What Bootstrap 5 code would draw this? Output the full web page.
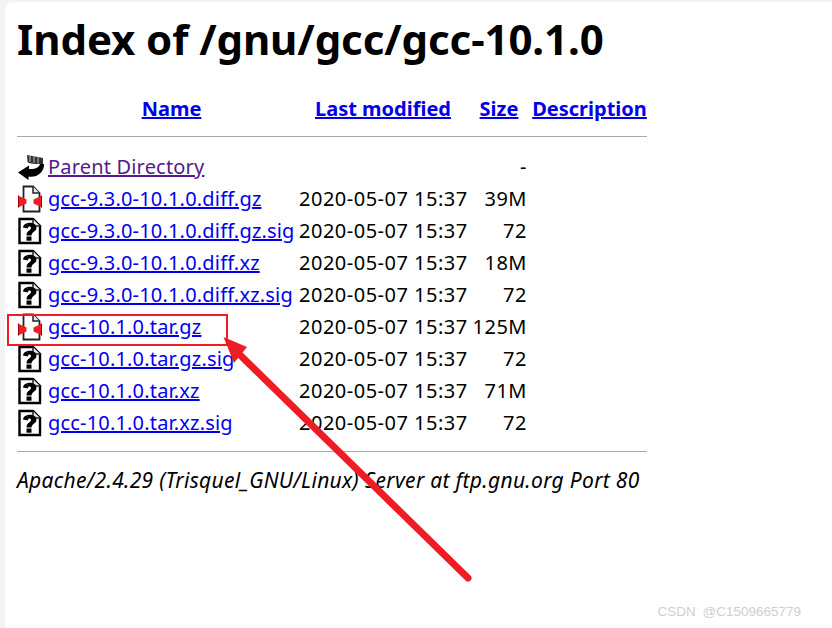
<!DOCTYPE html>
<html lang="en">
<head>
<meta charset="utf-8">
<title>Index of /gnu/gcc/gcc-10.1.0</title>
<link href="https://cdn.jsdelivr.net/npm/bootstrap@5.3.0/dist/css/bootstrap.min.css" rel="stylesheet">
<style>
html,body{height:100%;margin:0;overflow:hidden}
body{background:#f3f3f3;font-family:"Noto Sans","Open Sans",sans-serif;color:#000;font-size:20px;line-height:28px}
.pane{position:relative;margin:2px 0 0 5px;height:626px;background:#fff;border-top-left-radius:8px;padding:0 0 0 12px;overflow:hidden}
.pane-title{font-size:42px;line-height:58px;font-weight:700;margin:0;padding-top:8px;letter-spacing:-.1px}
.listing{border-collapse:separate;border-spacing:2px 0;margin:25px 0 0 -2px;width:634px;table-layout:fixed}
.listing th{font-weight:700;text-align:center;height:32px;padding:0;white-space:nowrap}
.listing th.nmh{padding-right:2px}
.listing th.desc{padding-left:3px}
.listing td{height:32px;padding:0;white-space:nowrap;vertical-align:middle}
.listing a{color:#0000ee}
.listing a.seen{color:#551a8b}
.listing td.nm{letter-spacing:.18px}
.listing td.dt{letter-spacing:.5px}
.listing td.num{text-align:right;letter-spacing:.5px}
.c-ico{width:29px}.c-name{width:249px}.c-date{width:170px}.c-size{width:56px}
.listing .ico-cell svg{display:block;margin-left:1px}
.rule-cell hr{margin:0;border:0;border-top:1px solid #a9a9a9;opacity:1}
.listing td.rule-top{height:26px;vertical-align:top;padding-top:11px}
.listing td.rule-bot{height:13px;vertical-align:bottom}
.srv{font-style:italic;margin:0;padding-top:14px;font-size:21px;letter-spacing:.3px}
.markup{position:absolute;left:-5px;top:-2px;pointer-events:none}
.mark-text{position:absolute;right:31px;bottom:8px;font-size:13.500px;line-height:16px;color:#cfcfcf;word-spacing:3px;font-family:"Liberation Sans",sans-serif}
</style>
</head>
<body>
<svg width="0" height="0" class="d-block" aria-hidden="true">
<defs>
<symbol id="ic-unk" viewBox="0 0 28 28">
<path d="M1.500 2H15L22 9V26H1.500Z" fill="#fff" stroke="#000" stroke-width="2.400"/>
<path d="M15 2V9H22" fill="#e8e8e8" stroke="#222" stroke-width="1.500"/>
<path d="M5 10.500C5.500 4.500 18 4 18.500 10.500C18.800 14.500 13.500 14.500 13.500 18.500H8.500C8.500 13.500 13 13.500 13 11C13 9 10 9 9.700 11.500Z" fill="#000"/>
<rect x="8.500" y="19.500" width="5" height="4.200" fill="#000"/>
</symbol>
<symbol id="ic-gz" viewBox="0 0 28 28">
<path d="M5.500 1.500H15L21.500 8V26.500H5.500Z" fill="#fff" stroke="#222" stroke-width="1.800"/>
<path d="M15 1.500V8H21.500" fill="#e8e8e8" stroke="#222" stroke-width="1.500"/>
<path d="M0 10.500L8.500 14.500V18.500L0 22.500Z" fill="#ee1c25"/>
<path d="M24 10.500L15.500 14.500V18.500L24 22.500Z" fill="#ee1c25"/>
<path d="M.5 10.500V22.500" stroke="#900" stroke-width="1"/>
<path d="M23.500 10.500V22.500" stroke="#900" stroke-width="1"/>
</symbol>
<symbol id="ic-back" viewBox="0 0 28 28">
<path d="M0 19.500L11 12.500V16C16 16.500 21 15 22 11H26C26.500 20 18 25 10.500 23.500V27Z" fill="#000"/>
<path d="M9 2L25 5V11H20C18 11 12 11 9.500 9Z" fill="#333"/>
<path d="M12 3V9M16 3.500V10M20 4.500V10.500" stroke="#aaa" stroke-width="1.200"/>
</symbol>
</defs>
</svg>
<main class="pane">
<h1 class="pane-title">Index of /gnu/gcc/gcc-10.1.0</h1>
<table class="listing">
<colgroup><col class="c-ico"><col class="c-name"><col class="c-date"><col class="c-size"><col></colgroup>
<thead><tr><th></th><th class="nmh"><a href="#">Name</a></th><th class="nmh"><a href="#">Last modified</a></th><th><a href="#">Size</a></th><th class="desc"><a href="#">Description</a></th></tr></thead>
<tbody>
<tr><td colspan="5" class="rule-cell rule-top"><hr></td></tr>
<tr><td class="ico-cell"><svg width="28" height="28"><use href="#ic-back"/></svg></td><td class="nm"><a class="seen" href="#">Parent Directory</a></td><td class="dt"></td><td class="num">-</td><td></td></tr>
<tr><td class="ico-cell"><svg width="28" height="28"><use href="#ic-gz"/></svg></td><td class="nm"><a href="#">gcc-9.3.0-10.1.0.diff.gz</a></td><td class="dt">2020-05-07 15:37</td><td class="num">39M</td><td></td></tr>
<tr><td class="ico-cell"><svg width="28" height="28"><use href="#ic-unk"/></svg></td><td class="nm"><a href="#">gcc-9.3.0-10.1.0.diff.gz.sig</a></td><td class="dt">2020-05-07 15:37</td><td class="num">72</td><td></td></tr>
<tr><td class="ico-cell"><svg width="28" height="28"><use href="#ic-unk"/></svg></td><td class="nm"><a href="#">gcc-9.3.0-10.1.0.diff.xz</a></td><td class="dt">2020-05-07 15:37</td><td class="num">18M</td><td></td></tr>
<tr><td class="ico-cell"><svg width="28" height="28"><use href="#ic-unk"/></svg></td><td class="nm"><a href="#">gcc-9.3.0-10.1.0.diff.xz.sig</a></td><td class="dt">2020-05-07 15:37</td><td class="num">72</td><td></td></tr>
<tr><td class="ico-cell"><svg width="28" height="28"><use href="#ic-gz"/></svg></td><td class="nm"><a href="#">gcc-10.1.0.tar.gz</a></td><td class="dt">2020-05-07 15:37</td><td class="num">125M</td><td></td></tr>
<tr><td class="ico-cell"><svg width="28" height="28"><use href="#ic-unk"/></svg></td><td class="nm"><a href="#">gcc-10.1.0.tar.gz.sig</a></td><td class="dt">2020-05-07 15:37</td><td class="num">72</td><td></td></tr>
<tr><td class="ico-cell"><svg width="28" height="28"><use href="#ic-unk"/></svg></td><td class="nm"><a href="#">gcc-10.1.0.tar.xz</a></td><td class="dt">2020-05-07 15:37</td><td class="num">71M</td><td></td></tr>
<tr><td class="ico-cell"><svg width="28" height="28"><use href="#ic-unk"/></svg></td><td class="nm"><a href="#">gcc-10.1.0.tar.xz.sig</a></td><td class="dt">2020-05-07 15:37</td><td class="num">72</td><td></td></tr>
<tr><td colspan="5" class="rule-cell rule-bot"><hr></td></tr>
</tbody>
</table>
<address class="srv">Apache/2.4.29 (Trisquel_GNU/Linux) Server at ftp.gnu.org Port 80</address>
<svg class="markup" width="832" height="628" viewBox="0 0 832 628" aria-hidden="true">
<rect x="8" y="315" width="219" height="30" fill="none" stroke="#ee1c25" stroke-width="2"/>
<path d="M468 578L238 353" stroke="#ee1c25" stroke-width="7" stroke-linecap="round" fill="none"/>
<path d="M223.500 337L247 347L234 363Z" fill="#ee1c25"/>
</svg>
<div class="mark-text">CSDN @C1509665779</div>
</main>
<script src="https://cdn.jsdelivr.net/npm/bootstrap@5.3.0/dist/js/bootstrap.bundle.min.js"></script>
</body>
</html>
